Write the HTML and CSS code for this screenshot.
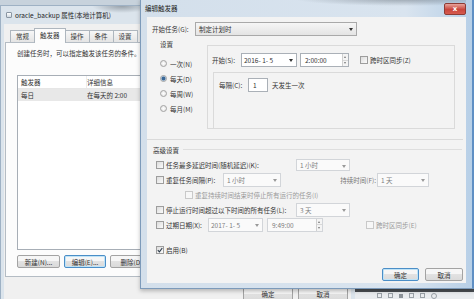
FILE: index.html
```html
<!DOCTYPE html>
<html lang="zh-CN">
<head>
    <meta charset="UTF-8">
    <meta name="viewport" content="width=device-width, initial-scale=1.0">
    <title>编辑触发器</title>
    <link rel="stylesheet" href="styles.css">
</head>
<body>
    <!-- property sheet behind -->
    <div class="window back">
        <div class="titlebar"><span class="app-icon"></span>oracle_backup 属性(本地计算机)</div>
        <div class="client">
            <div class="tabs">
                <span class="tab">常规</span>
                <span class="tab active">触发器</span>
                <span class="tab">操作</span>
                <span class="tab">条件</span>
                <span class="tab">设置</span>
            </div>
            <div class="tab-panel">
                <p class="hint">创建任务时，可以指定触发该任务的条件。</p>
                <div class="listview">
                    <div class="lv-head"><span class="lv-col">触发器</span><span>详细信息</span></div>
                    <div class="lv-row"><span class="lv-col">每日</span><span>在每天的 2:00</span></div>
                </div>
                <div class="btn-row">
                    <span class="btn w43">新建(N)...</span>
                    <span class="btn btn-default w42">编辑(E)...</span>
                    <span class="btn w43">删除(D)</span>
                </div>
            </div>
            <div class="dialog-buttons">
                <span class="btn w50">确定</span>
                <span class="btn w50">取消</span>
            </div>
        </div>
    </div>

    <div class="taskbar">
        <span class="tb-mark"></span><span class="tb-mark"></span><span class="tb-dot"></span>
        <span class="tb-mark"></span><span class="tb-mark"></span><span class="tb-ring"></span>
    </div>

    <!-- edit trigger dialog -->
    <div class="window front">
        <div class="titlebar">编辑触发器</div>
        <span class="close-btn">x</span>
        <div class="client">
            <div class="begin-row">
                <span class="begin-label">开始任务(G):</span>
                <span class="combo combo-begin">制定计划时<i class="arrow"></i></span>
            </div>

            <div class="settings">
                <div class="freq">
                    <div class="freq-title">设置</div>
                    <ul class="radios">
                        <li><span class="radio"></span>一次(N)</li>
                        <li class="on"><span class="radio"></span>每天(D)</li>
                        <li><span class="radio"></span>每周(W)</li>
                        <li><span class="radio"></span>每月(M)</li>
                    </ul>
                </div>
                <div class="sched">
                    <div class="field-row">
                        <span class="lbl w29">开始(S):</span>
                        <span class="date w56">2016- 1- 5<i class="arrow"></i></span>
                        <span class="time w49">2:00:00<i class="spin"></i></span>
                        <span class="check ml11"></span>
                        <span>跨时区同步(Z)</span>
                    </div>
                    <div class="recur">
                        <div class="field-row">
                            <span class="lbl w29">每隔(C):</span>
                            <span class="input">1</span>
                            <span class="after">天发生一次</span>
                        </div>
                    </div>
                </div>
            </div>

            <div class="adv-title">高级设置</div>
            <div class="adv">
                <div class="adv-row">
                    <span class="check"></span>
                    <span class="lbl w130">任务最多延迟时间(随机延迟)(K):</span>
                    <span class="combo disabled w54 h12">1 小时<i class="arrow"></i></span>
                </div>
                <div class="adv-row">
                    <span class="check"></span>
                    <span class="lbl w57">重复任务间隔(P):</span>
                    <span class="combo disabled w58">1 小时<i class="arrow"></i></span>
                    <span class="lbl-right w96">持续时间(F):</span>
                    <span class="combo disabled w52">1 天<i class="arrow"></i></span>
                </div>
                <div class="adv-row sub">
                    <span class="check disabled"></span>
                    <span class="muted">重复持续时间结束时停止所有运行的任务(I)</span>
                </div>
                <div class="adv-row">
                    <span class="check"></span>
                    <span class="lbl w130">停止运行时间超过以下时间的所有任务(L):</span>
                    <span class="combo disabled w54">3 天<i class="arrow"></i></span>
                </div>
                <div class="adv-row">
                    <span class="check"></span>
                    <span class="lbl w42">过期日期(X):</span>
                    <span class="date disabled w55">2017- 1- 5<i class="arrow"></i></span>
                    <span class="time disabled w56">9:49:00<i class="spin"></i></span>
                    <span class="check disabled ml43"></span>
                    <span class="muted">跨时区同步(E)</span>
                </div>
            </div>

            <div class="enable-row">
                <span class="check checked">
                    <svg width="6" height="6" viewBox="0 0 6 6"><path d="M0.8 3.2 L2.4 4.8 L5.3 1" fill="none" stroke="#2c3a4a" stroke-width="1.1"/></svg>
                </span>
                <span>启用(B)</span>
            </div>

            <div class="ok-row">
                <span class="btn btn-default w37">确定</span>
                <span class="btn w38">取消</span>
            </div>
        </div>
    </div>
</body>
</html>
```

FILE: styles.css
```css
* {
    box-sizing: border-box;
}
body {
    margin: 0;
    width: 474px;
    height: 299px;
    overflow: hidden;
    position: relative;
    background: #c7d2dc;
    font-family: "Noto Sans CJK SC", "Noto Sans", sans-serif;
    font-size: 6.5px;
    color: #333;
}
p, ul {
    margin: 0;
    padding: 0;
}
li {
    list-style: none;
}

/* windows */
.window {
    position: absolute;
    display: flex;
    flex-direction: column;
}
.titlebar {
    display: flex;
    align-items: center;
    white-space: nowrap;
    color: #222;
}
.client {
    flex: 1;
    display: flex;
    flex-direction: column;
    overflow: hidden;
}

.back {
    left: 0;
    top: 5px;
    width: 356px;
    height: 294px;
    border: 1px solid #9eb1c4;
    border-bottom: none;
    padding: 0 4px 0 3px;
    background: #dbe4ec;
}
.back .titlebar {
    height: 18px;
    padding-left: 2px;
    background: radial-gradient(ellipse 30px 7px at 118px 0, rgba(70, 80, 90, .45), transparent);
}
.app-icon {
    width: 6px;
    height: 6px;
    margin-right: 3px;
    border: 1px solid #8a96a2;
    border-radius: 1px;
    background: linear-gradient(#fff, #cfd8e0);
}
.back .client {
    background: #f0f0f0;
    padding-top: 6px;
}
.tabs {
    display: flex;
    margin-left: 6px;
    height: 12px;
    position: relative;
    z-index: 1;
}
.tab {
    height: 12px;
    line-height: 11px;
    padding: 0 5px;
    margin-right: -1px;
    border: 1px solid #aeb6be;
    border-bottom: none;
    background: linear-gradient(#f7f7f7, #e4e4e4);
}
.tab.active {
    height: 15px;
    margin-top: -2px;
    line-height: 13px;
    background: #fcfcfc;
}
.tab-panel {
    flex-shrink: 0;
    margin-left: 1px;
    height: 235px;
    border: 1px solid #b4bcc4;
    background: #fcfcfc;
    padding: 6px 0 8px 11px;
    display: flex;
    flex-direction: column;
}
.hint {
    line-height: 9px;
    white-space: nowrap;
}
.listview {
    margin-top: 17px;
    width: 200px;
    height: 175px;
    border: 1px solid #a7aeb6;
    background: #fff;
}
.lv-head, .lv-row {
    display: flex;
    white-space: nowrap;
}
.lv-head {
    height: 13px;
    line-height: 12px;
    border-bottom: 1px solid #e6e6e6;
}
.lv-row {
    height: 12px;
    line-height: 12px;
    background: #e8e8e8;
}
.lv-col {
    width: 69px;
    padding-left: 3px;
}
.lv-head .lv-col {
    border-right: 1px solid #ececec;
}
.btn-row {
    display: flex;
    gap: 4px;
    margin-top: 5px;
}
.dialog-buttons {
    display: flex;
    justify-content: flex-end;
    gap: 5px;
    margin-top: 10px;
    padding-right: 3px;
}

/* buttons */
.btn {
    display: flex;
    align-items: center;
    justify-content: center;
    flex-shrink: 0;
    height: 13px;
    border: 1px solid #a3a3a3;
    border-radius: 2px;
    background: linear-gradient(#f6f6f6 50%, #e2e2e2 50%, #dadada);
    color: #333;
    white-space: nowrap;
}
.btn-default {
    border-color: #4b8ec7;
    box-shadow: inset 0 0 0 1px #bfe3f7;
}
.dialog-buttons .btn {
    height: 14px;
}
.w37 { width: 37px; }
.w38 { width: 38px; }
.w42 { width: 42px; }
.w43 { width: 43px; }
.w50 { width: 50px; }

/* taskbar strip bottom right */
.taskbar {
    position: absolute;
    left: 355px;
    top: 289px;
    right: 0;
    bottom: 0;
    display: flex;
    align-items: center;
    gap: 6px;
    padding: 0 0 0 22px;
    border-top: 3px solid #4a4f54;
    background: #e9ecef;
}
.tb-mark {
    width: 5px;
    height: 5px;
    border: 1px solid #9aa1a7;
}
.tb-dot {
    width: 4px;
    height: 4px;
    background: #8c9399;
}
.tb-ring {
    width: 6px;
    height: 6px;
    border: 1px solid #9aa1a7;
    border-radius: 50%;
}

/* edit trigger dialog */
.front {
    left: 140px;
    top: -2px;
    width: 334px;
    height: 291px;
    border: 1px solid #7c9aba;
    border-right: 2px solid #5f8fc4;
    padding: 0 6px 5px 6px;
    background: linear-gradient(90deg, #d3dfeb, #d9e4ef 80%, #b7cfe7);
    box-shadow: 0 2px 4px rgba(0, 0, 0, .25);
}
.front .titlebar {
    height: 18px;
    margin-left: -2px;
    background: radial-gradient(ellipse 110px 7px at 260px 0, rgba(80, 90, 100, .45), transparent);
}
.close-btn {
    position: absolute;
    top: 4px;
    right: 6px;
    width: 22px;
    height: 12px;
    display: flex;
    align-items: center;
    justify-content: center;
    border: 1px solid #8d3b35;
    border-radius: 2px;
    background: linear-gradient(#e8a49c, #c9463d 55%, #d65a4f);
    color: #fff;
    font-family: "DejaVu Sans", sans-serif;
    font-size: 7px;
    font-weight: bold;
}
.front .client {
    background: #f3f3f3;
    padding: 5px 3px 2px 0;
}
.begin-row {
    display: flex;
    align-items: center;
    height: 14px;
    padding-left: 5px;
}
.begin-label {
    width: 43px;
    white-space: nowrap;
}

/* combos, date pickers, inputs */
.combo, .date, .time, .input {
    position: relative;
    display: flex;
    align-items: center;
    height: 14px;
    border: 1px solid #aab0b7;
    background: #fff;
    white-space: pre;
    color: #333;
}
.combo {
    padding-left: 3px;
}
.combo-begin {
    width: 162px;
    background: linear-gradient(#f6f6f6, #e4e4e4);
    border-color: #a9a9a9;
}
.date {
    padding-left: 2px;
}
.time {
    padding-left: 4px;
    margin-left: 3px;
}
.input {
    width: 20px;
    padding-left: 4px;
}
.disabled {
    border-color: #d2d5d9;
    background: #fafafa;
    color: #808080;
}
.arrow {
    position: absolute;
    right: 3px;
    top: 5px;
    border-left: 2.5px solid transparent;
    border-right: 2.5px solid transparent;
    border-top: 3px solid #333;
}
.disabled .arrow {
    border-top-color: #999;
}
.spin {
    position: absolute;
    right: 0;
    top: 0;
    bottom: 0;
    width: 6px;
    border-left: 1px solid #d0d0d0;
    background:
        linear-gradient(#d8d8d8, #d8d8d8) center / 100% 1px no-repeat,
        #f4f4f4;
}
.spin::before, .spin::after {
    content: "";
    position: absolute;
    left: 1px;
    border-left: 1.5px solid transparent;
    border-right: 1.5px solid transparent;
}
.spin::before {
    top: 2px;
    border-bottom: 2px solid #777;
}
.spin::after {
    bottom: 2px;
    border-top: 2px solid #777;
}
.w29 { width: 29px; }
.w49 { width: 49px; }
.w52 { width: 52px; }
.w54 { width: 54px; }
.w55 { width: 55px; }
.w56 { width: 56px; }
.w57 { width: 57px; }
.w58 { width: 58px; }
.w96 { width: 96px; }
.w130 { width: 130px; }
.h12 { height: 12px; }
.ml11 { margin-left: 11px; }
.ml43 { margin-left: 43px; }
.lbl, .lbl-right {
    white-space: nowrap;
    flex-shrink: 0;
}
.lbl-right {
    text-align: right;
    padding-right: 1px;
    color: #777;
}

/* settings group */
.settings {
    display: grid;
    grid-template-columns: 60px 248px;
    margin-top: 4px;
    padding-bottom: 10px;
    border-bottom: 1px solid #dadada;
}
.freq-title {
    line-height: 9px;
    padding-left: 13px;
}
.radios {
    margin-top: 7px;
}
.radios li {
    display: flex;
    align-items: center;
    gap: 3px;
    height: 15px;
    padding-left: 13px;
    white-space: nowrap;
}
.radio {
    width: 7px;
    height: 7px;
    border-radius: 50%;
    border: 1px solid #a2a2a2;
    background: radial-gradient(circle, #fff, #dedede);
}
.radios .on .radio {
    background: radial-gradient(circle, #3a6796 0 1.5px, #a9c3dc 2.2px, #eef3f8 3px);
}
.sched {
    margin-top: 5px;
    height: 84px;
    border: 1px solid #dadada;
    padding: 7px 0 0 4px;
    display: flex;
    flex-direction: column;
}
.field-row {
    display: flex;
    align-items: center;
    height: 14px;
    white-space: nowrap;
}
.field-row .check {
    margin-right: 2px;
}
.recur {
    flex: 1;
    margin: 5px 0 0 1px;
    border-top: 1px solid #dadada;
    border-left: 1px solid #dadada;
    padding: 5px 0 0 5px;
}
.after {
    margin-left: 4px;
}

/* checkboxes */
.check {
    display: flex;
    align-items: center;
    justify-content: center;
    width: 8px;
    height: 8px;
    flex-shrink: 0;
    border: 1px solid #9d9d9d;
    background: linear-gradient(135deg, #dcdcdc, #fbfbfb);
}
.check.disabled {
    border-color: #c9c9c9;
    background: #f7f7f7;
}
.muted {
    color: #9a9a9a;
    white-space: nowrap;
}

/* advanced settings */
.adv-title {
    display: flex;
    align-items: center;
    margin-top: 5px;
    height: 9px;
    padding-left: 6px;
    white-space: nowrap;
}
.adv-title::after {
    content: "";
    flex: 1;
    height: 1px;
    margin: 0 1px 0 4px;
    background: #dedede;
}
.adv {
    margin-top: 3px;
}
.adv-row {
    display: flex;
    align-items: center;
    height: 15px;
    padding-left: 9px;
}
.adv-row .check {
    margin-right: 2px;
}
.adv-row.sub {
    padding-left: 38px;
}
.adv .time {
    margin-left: 4px;
}
.enable-row {
    display: flex;
    align-items: center;
    gap: 2px;
    height: 15px;
    margin-top: 10px;
    padding-left: 9px;
}
.ok-row {
    display: flex;
    justify-content: flex-end;
    gap: 6px;
    margin-top: 11px;
}
```
